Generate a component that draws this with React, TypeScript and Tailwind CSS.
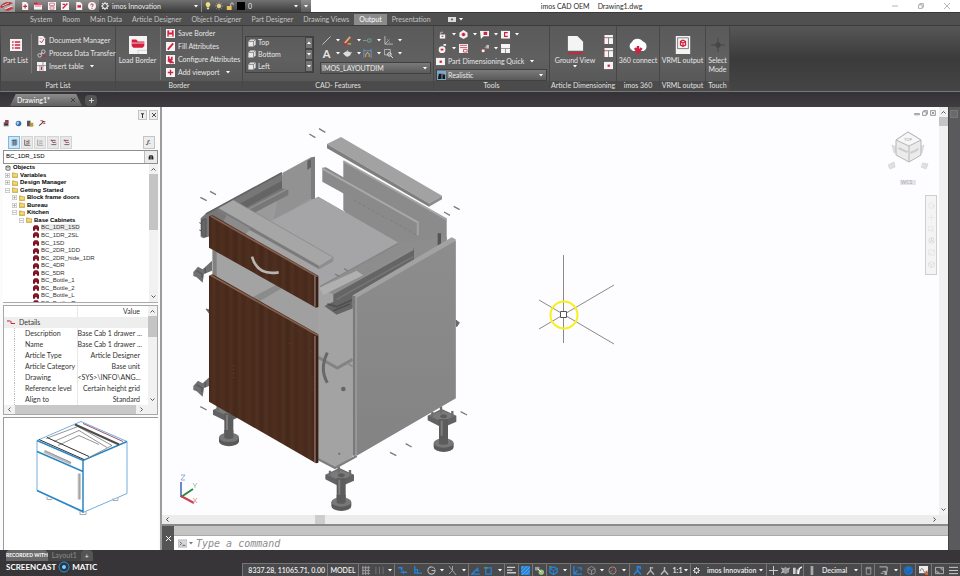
import React from "react";

type P = { d: string; f?: string; s?: string; w?: number };

/* Small pictogram on a 10-unit grid */
function Ico({ p, c = "size-[9px]" }: { p: P[]; c?: string }) {
  return (
    <svg viewBox="0 0 10 10" className={`${c} shrink-0`} aria-hidden="true">
      {p.map((q, i) => (
        <path key={i} d={q.d} fill={q.f ?? "none"} stroke={q.s ?? "none"} strokeWidth={q.w ?? 1} />
      ))}
    </svg>
  );
}

const R = "#d3203f";
const W = "#f4f4f4";
const B = "#2384dd";
const tile: P = { d: "M0 0H10V10H0Z", f: W };
const page: P = { d: "M1.5 0H6.5L9 2.5V10H1.5Z", f: W };

const icons: Record<string, P[]> = {
  newFile: [page, { d: "M5.2 3V8M2.8 5.5H7.6", s: R, w: 1.5 }],
  open: [{ d: "M0 2H10V9.5H0Z", f: W }, { d: "M0 3.5V1H4L5 2H10V3.5Z", f: R }, { d: "M1 5H9", s: R, w: 0.8 }],
  save: [tile, { d: "M2 1.5H8V4.5H2ZM2.5 6H7.5V9H2.5Z", s: "#c76b78", w: 1 }],
  saveAs: [tile, { d: "M2 8L8 2M2 3H5", s: R, w: 1.7 }],
  plot: [page, { d: "M3 4H7.5V7H3Z", f: R }],
  help: [{ d: "M5 0A5 5 0 1 0 5 10A5 5 0 1 0 5 0", f: W }, { d: "M3.5 4Q3.5 2.3 5 2.3T6.5 4Q6.5 5 5 5.5V6.5M5 7.5V8.7", s: R, w: 1.1 }],
  gear: [{ d: "M5 2A3 3 0 1 0 5 8A3 3 0 1 0 5 2M5 0V2M5 8V10M0 5H2M8 5H10M1.5 1.5L2.8 2.8M7.2 7.2L8.5 8.5M8.5 1.5L7.2 2.8M2.8 7.2L1.5 8.5", s: "#eee", w: 1.3 }],
  bulb: [{ d: "M5 0A3 3 0 0 0 3.4 5.5V7H6.6V5.5A3 3 0 0 0 5 0", f: "#f3dd79" }, { d: "M3.6 8.3H6.4", s: "#ddd", w: 1.6 }],
  sun: [{ d: "M5 2.5A2.5 2.5 0 1 0 5 7.5A2.5 2.5 0 1 0 5 2.5", f: "#f5df8c" }, { d: "M5 0V10M0 5H10M1.5 1.5L8.5 8.5M8.5 1.5L1.5 8.5", s: "#dacb95", w: 0.6 }],
  lock: [{ d: "M1 5H7V10H1Z", f: "#e9c456" }, { d: "M6 5V2.5Q6 1 7.5 1T9 2.5V4", s: "#ddd" }],
  list: [tile, { d: "M1.8 2.5H3M1.8 5H3M1.8 7.5H3M4 2.5H8.5M4 5H8.5M4 7.5H8.5", s: R, w: 1.1 }],
  doc: [page, { d: "M3 5.5L5 7.5L8 3", s: R, w: 1 }, { d: "M3 2.5H6", s: "#999", w: 0.8 }],
  link: [{ d: "M3 5A2 2 0 1 0 3 9A2 2 0 1 0 3 5M7 1A2 2 0 1 0 7 5A2 2 0 1 0 7 1M4 6L6 4", s: "#c8c8c8", w: 1.1 }, { d: "M6 8H10", s: R, w: 1.4 }],
  insTable: [tile, { d: "M0 4H10M3.3 4V10M6.6 0V10", s: "#777", w: 0.8 }, { d: "M5 5V9", s: R, w: 1.2 }],
  border: [tile, { d: "M1.5 2H4L5 3H8.5V5.5L7.5 6.5H2.5L1.5 5.5Z", f: R }, { d: "M1.5 3.9H8.5", s: "#fff", w: 0.4 }, { d: "M5 10V8H10", s: "#ccc", w: 0.4 }],
  disk: [tile, { d: "M1.5 1.5H8.5V8.5H1.5Z", f: R }, { d: "M3.5 1.5H6.5V4H3.5ZM3 6H7V8.5H3Z", f: W }],
  pen: [tile, { d: "M2 8.5L8 1.5", s: R, w: 2 }],
  tool: [tile, { d: "M3 1.5V5L8.5 9M3 5H6.5V2M2 6L6 9", s: R, w: 1.8 }],
  plus: [tile, { d: "M5 2V8M2 5H8", s: R, w: 1.5 }],
  cube: [{ d: "M0.5 3L3 0.5H9.5V7L7 9.5H0.5Z", f: "#e8e8e8" }, { d: "M0.5 3H7V9.5M7 3L9.5 0.5", s: "#666", w: 0.9 }],
  line: [{ d: "M0.5 9.5L9.5 0.5", s: "#ccc", w: 1 }],
  pencil: [{ d: "M2 8L8 1", s: "#e4a86a", w: 2 }, { d: "M0 9H5L6.5 6", s: R, w: 1.2 }, { d: "M5 8.8H9", s: "#e6d34c", w: 1.1 }],
  extend: [{ d: "M0 5H4", s: "#999", w: 1 }, { d: "M7 3A2 2 0 1 0 7 7A2 2 0 1 0 7 3", s: "#5fa08e", w: 1.2 }],
  axes: [{ d: "M1 0V9H10M1 9L6 4", s: "#bbb", w: 1 }, { d: "M3 3L6 6V8.5", s: "#7297bf", w: 0.8 }],
  teapot: [{ d: "M1.5 4Q5 1 8 4L10 3L8 7Q5 10 2.5 7.5L0 5ZM4.5 1H5.5V2H4.5Z", f: "#dedede" }],
  dim: [{ d: "M1 0V10M9 0V10M1 2H9", s: "#5d9bd5", w: 1 }, { d: "M3 9V6L5 4L7 6V9", s: "#e39b44", w: 1.2 }],
  zoom: [{ d: "M0.5 0.5H7V6.5H0.5Z", s: "#bbb", w: 1 }, { d: "M6 4A2 2 0 1 0 6 8A2 2 0 1 0 6 4M7.5 7.5L10 10", s: "#ddd", w: 1.1 }],
  smallLock: [{ d: "M2 5H8V9.5H2Z", f: W }, { d: "M3 5V2.5H5.5", s: "#bbb", w: 1 }, { d: "M4 7H6", s: R, w: 1.2 }],
  ring: [{ d: "M5 0L9.5 3V7.5L5 10L0.5 7.5V3Z", f: W }, { d: "M5 3V7M3 5H7", s: R, w: 2 }],
  flag: [{ d: "M0 1H10V7H4L1 10Z", f: W }, { d: "M4 2H8V5.5H4Z", f: R }],
  cTile: [{ d: "M0 1H10V9.5H0Z", f: W }, { d: "M7.5 3H4V7H7.5", s: R, w: 1.3 }],
  bomb: [{ d: "M4.5 2.5A3.7 3.7 0 1 0 4.5 10A3.7 3.7 0 1 0 4.5 2.5M6 0H9V2H6Z", f: W }, { d: "M3 6.2H6", s: R, w: 2 }],
  frame: [tile, { d: "M1 1.5H9M1 4H9M5 6V9H9V6Z", s: "#d1576b", w: 1.1 }],
  key: [{ d: "M2 6H5V9H2Z", f: W }, { d: "M4 6L8 2", s: "#aaa", w: 1.2 }, { d: "M3 5.5L6 4.5", s: R, w: 1.3 }, { d: "M7 1H10V5H7Z", f: "#bbb" }],
  panes: [tile, { d: "M0 5H10M5 5V10", s: "#777", w: 0.8 }],
  dot: [{ d: "M0 1H10V9H0Z", f: W }, { d: "M4 4H6.5V6.5H4Z", f: R }],
  scene: [{ d: "M0 0H10V10H0Z", f: "#73acd0" }, { d: "M1 9L2 3H5V9ZM6 9V4H9V9Z", f: "#161616" }, { d: "M5 3H7V5H5Z", f: R }],
  ground: [{ d: "M1 0H6L9 3V7.7H1Z", f: W }, { d: "M1 9.2H9", s: R, w: 0.9 }],
  tbl: [tile, { d: "M0 3H10M5 3V10", s: "#777", w: 1 }, { d: "M0 0V10", s: R, w: 1 }],
  cloud: [{ d: "M2.5 8A2.5 2.5 0 0 1 2 3.5A3.2 3.2 0 0 1 7.5 3.3A2.5 2.5 0 0 1 7.7 8Z", f: "#fff" }, { d: "M5 5.5V9M3.5 6.5L5 8.8L6.8 6.5", s: R, w: 1.2 }],
  vrml: [{ d: "M1 0H9V10H1Z", f: W }, { d: "M2 1H8V7H2Z", s: "#555", w: 0.4 }, { d: "M3.6 3L5 2.3L6.4 3V5L5 5.7L3.6 5ZM3.6 3L5 4L6.4 3M5 4V5.7", s: R, w: 0.7 }],
  cross: [{ d: "M5 0V10M0 5H10", s: "#393939", w: 0.5 }, { d: "M3.7 3.7H6.3V6.3H3.7Z", s: "#393939", w: 0.5 }],
  house: [{ d: "M0 9.5V3.5L2.5 0.5H7.5L10 3.5V9.5H6.5V7H3.5V9.5Z", f: "#7c1020" }, { d: "M2.5 3.5H7.5", s: "#b74a58", w: 0.7 }],
  folder: [{ d: "M0.5 1.5H4L5 3H9.5V9H0.5Z", f: "#f3ce55", s: "#8b7326", w: 0.8 }, { d: "M2.5 5H9", s: "#fff0af", w: 1 }],
  db: [{ d: "M1.5 2.5Q5 0 8.5 2.5V8Q5 10 1.5 8ZM1.5 2.5Q5 5 8.5 2.5", s: "#333", w: 1, f: "#ddd" }],
  binoc: [{ d: "M1 9V5L3 1.5H4.5V9ZM9 9V5L7 1.5H5.5V9Z", f: "#222" }],
  t1: [{ d: "M1 3H8V9H1Z", f: "#777" }, { d: "M3 0H8V4H3Z", f: "#a33643" }, { d: "M2 6H7", s: "#111", w: 1.5 }],
  t2: [{ d: "M5 1A4 4 0 1 0 5 9A4 4 0 1 0 5 1", f: "#326fae" }, { d: "M2 4Q4 1 6 3L5 6L3 7", f: "#a7d2ec" }],
  t3: [{ d: "M0 1H5V9H0Z", f: "#555" }, { d: "M4 4H9V9.5H4Z", f: "#b9963f" }],
  t4: [{ d: "M0 8L4 5L6 2L9 3", s: "#444", w: 1.5 }, { d: "M2 1H5V4M6 5H9", s: R, w: 1.2 }],
  b1: [{ d: "M1 2L3 0.5H9V8L7 9.5H1Z", f: "#8da4b3" }, { d: "M4 2V9M7 2V9M1 2H7", s: "#34536a", w: 1 }],
  b2: [{ d: "M1 1V9H9M3 4H6M7 1V7M3 7H6", s: "#555", w: 1.2 }, { d: "M4 2L6 5", s: "#a44", w: 1 }],
  b3: [{ d: "M1 1V9H9M3 3H8M3 6H8", s: "#888", w: 1 }],
  b4: [{ d: "M1 2H8M2 8H9M4 5H7", s: "#555", w: 1.2 }, { d: "M2 1L4 5M7 4L9 6", s: R, w: 1 }],
  sGrid: [{ d: "M1 0V10M4 0V10M7 0V10M0 2H9M0 5H9M0 8H9", s: "#999", w: 1.2 }],
  sGrid2: [{ d: "M1 1V9M5 1V9M9 1V9", s: "#777", w: 1 }],
  sSnap: [{ d: "M0 2H4V5M3 7H10", s: B, w: 1.8 }, { d: "M6 5V9", s: B, w: 1 }],
  sOrtho: [{ d: "M2 0V8H10M2 4H5V8", s: B, w: 1.4 }],
  sPolar: [{ d: "M5 1A4 4 0 1 0 9 5H5", s: "#bbb", w: 1.2 }, { d: "M5 1A4 4 0 0 1 9 4", s: "#bbb", w: 1 }],
  sIso: [{ d: "M1 0L9 10M5 0V5L1 9", s: "#aaa", w: 1 }],
  sTrack: [{ d: "M0 9H10M1 9L8 2M6 5H9", s: B, w: 1.5 }],
  sOsnap: [{ d: "M2 2H8V9H2Z", s: B, w: 1.3 }, { d: "M0 2H4", s: "#45a45c", w: 1.6 }],
  sLines: [{ d: "M0 1.5H9M0 4.5H6M0 7.5H10", s: "#ccc", w: 1.5 }],
  sHatch: [{ d: "M0 0H10V10H0Z", f: B }, { d: "M0 3L3 0M0 7L7 0M1 10L10 1M5 10L10 5", s: "#9bc8ef", w: 0.6 }],
  sSel: [{ d: "M0 1H5V5H0Z", f: "#999" }, { d: "M7 4A3 3 0 1 0 7 10A3 3 0 1 0 7 4", f: "#9fc27a" }, { d: "M3 3L7 7", s: "#eee", w: 1 }],
  sGlobe: [{ d: "M5 1L9 3V7L5 9.5L1 7V3Z", s: B, w: 1.4 }, { d: "M1 3L5 5L9 3M5 5V9", s: B, w: 1 }, { d: "M0 1H3", s: "#45a45c", w: 1.5 }],
  sUcs: [{ d: "M1 0V9H10M1 9L5 5M5 2H9V5", s: B, w: 1.5 }],
  sCube: [{ d: "M5 0.5L9 3V7.5L5 9.5L1 7.5V3ZM1 3L5 5L9 3M5 5V9.5", s: "#999", w: 0.9 }],
  sGizmo: [{ d: "M5 1A4 4 0 1 0 5 9A4 4 0 1 0 5 1", s: "#999", w: 1 }, { d: "M5 2V5L8 7", s: R, w: 1 }, { d: "M5 5L2 7", s: "#4a9c57", w: 1 }],
  sMan: [{ d: "M5 1V5L1 9.5M5 5L9 9.5M4 1H8V4", s: B, w: 1.8 }],
  sMan2: [{ d: "M5 1V5L1 9.5M5 5L9 9.5M5 2H8", s: "#bbb", w: 1.4 }],
  sMan3: [{ d: "M5 1V5L1 9.5M5 5L9 9.5", s: "#bbb", w: 1.6 }],
  sPlus: [{ d: "M5 0V10M0 5H10", s: "#ccc", w: 1.1 }],
  sIsolate: [{ d: "M5 1L9 3V7L5 9L1 7V3Z", f: "#999" }, { d: "M0 2L3 4M10 2L7 4M0 8L3 6", s: "#ddd", w: 0.9 }],
  sBars: [{ d: "M0 2H3V9H0ZM4 4H6V9H4Z", f: "#ccc" }, { d: "M6 9L7 3L10 1", s: "#fff", w: 1.6 }],
  sBar: [{ d: "M4 0H7V10H4Z", f: "#aaa" }],
  sProps: [{ d: "M2.5 1.5H7.5V9H2.5ZM2 3H8", s: "#999", w: 1.1 }],
  sMonitor: [{ d: "M0.5 1H9V6H4M2 8H5", s: "#bbb", w: 1.1 }, { d: "M6 6H9V10H6Z", f: "#aaa" }],
  sPerf: [{ d: "M5 0A5 5 0 1 0 5 10A5 5 0 1 0 5 0", f: "#1d71c4" }, { d: "M2 5L5 8L8 4", s: "#124b86", w: 0.8 }],
  sPic: [{ d: "M0 0H10V8H0Z", f: "#eee" }, { d: "M1 6Q3 0 5 5T9 5", s: "#555", w: 0.8 }, { d: "M7 6H10V10H7Z", f: "#e2633a" }],
  sFull: [{ d: "M0.5 1.5H9.5V8.5H0.5ZM2 5V7H5M8 5V3H6", s: "#bbb", w: 1 }],
  sMenu: [{ d: "M0 1.5H10M0 5H10M0 8.5H10", s: "#ccc", w: 1.1 }],
};

const I = ({ n, c }: { n: string; c?: string }) => <Ico p={icons[n]} c={c} />;

function Caret({ c = "text-white" }: { c?: string }) {
  return (
    <svg viewBox="0 0 4 3" className={`h-[3px] w-[4px] shrink-0 ${c}`} aria-hidden="true">
      <path d="M0 0H4L2 2.5Z" fill="currentColor" />
    </svg>
  );
}

/* Drop-down with its arrow drawn over the right edge */
function Combo({ label, options, c, s }: { label: string; options: string[]; c: string; s: string }) {
  return (
    <div className={`relative flex items-center ${c}`}>
      <select aria-label={label} className={`h-[10px] w-full appearance-none bg-transparent leading-[10px] text-[#ececec] outline-none ${s}`}>
        {options.map((o) => (
          <option key={o}>{o}</option>
        ))}
      </select>
      <span className="pointer-events-none absolute right-[3px]">
        <Caret />
      </span>
    </div>
  );
}

function TitleBar() {
  const quick: [string, string][] = [["newFile", "New"], ["open", "Open"], ["save", "Save"], ["saveAs", "Save as"], ["plot", "Plot"], ["help", "Help"]];
  return (
    <header className="flex h-[13px] items-stretch border-b border-[#3a3a3a] bg-white">
      <div className="flex w-[311px] shrink-0 items-stretch bg-linear-to-b from-[#8d8d8d] to-[#5c5c5c]">
        <button aria-label="Application menu" className="w-[15px] bg-linear-to-b from-[#c7c7c7] to-[#929292]">
          <svg viewBox="0 0 15 12" className="h-[12px] w-[15px]" aria-hidden="true">
            <path d="M0 7Q3 2 9 2L13 3L9 5Q5 5 2 8Z" fill="#b52a33" />
            <path d="M4 10L11 7L14 8L8 11Z" fill="#cf343e" />
            <path d="M2 6L9 3M5 9L12 6" stroke="#fff" strokeWidth=".7" />
          </svg>
        </button>
        <div className="flex w-[84px] items-center justify-between pr-[3px] pl-[6px]">
          {quick.map(([n, l]) => (
            <button key={n} aria-label={l} className="flex">
              <I n={n} c="size-[8px]" />
            </button>
          ))}
        </div>
        <div className="flex w-[102px] items-center bg-linear-to-b from-[#717171] to-[#3e3e3e] pl-[2px]">
          <I n="gear" c="size-[8px]" />
          <Combo label="Workspace" options={["imos Innovation"]} c="flex-1" s="pl-[3px]" />
        </div>
        <div className="flex w-[100px] items-center gap-[3px] border-l border-[#8a8a8a] bg-linear-to-b from-[#717171] to-[#3e3e3e] pl-[2px]">
          <I n="bulb" c="size-[8px]" />
          <I n="sun" c="size-[8px]" />
          <I n="lock" c="size-[8px]" />
          <span className="size-[8px] bg-black" />
          <Combo label="Layer" options={["0"]} c="flex-1" s="" />
        </div>
        <button aria-label="More tools" className="flex flex-1 items-center justify-center">
          <Caret />
        </button>
      </div>
      <h1 className="flex flex-1 items-center justify-center gap-[8px] pr-[16px] text-[#2b2b2b]">
        <span>imos CAD OEM</span>
        <span>Drawing1.dwg</span>
      </h1>
      <div className="flex w-[72px] shrink-0 items-center gap-[20px] pl-[4px]">
        <button aria-label="Minimise" className="flex">
          <Ico c="size-[6px]" p={[{ d: "M0 5H10", s: "#aaa", w: 1.5 }]} />
        </button>
        <button aria-label="Restore" className="flex">
          <Ico c="size-[6px]" p={[{ d: "M1 3H7V9H1ZM3 3V1H9V7H7", s: "#999", w: 1.3 }]} />
        </button>
        <button aria-label="Close" className="flex">
          <Ico c="size-[6px]" p={[{ d: "M0 0L10 10M10 0L0 10", s: "#999", w: 1.2 }]} />
        </button>
      </div>
    </header>
  );
}

function Tabs() {
  const tabs = ["System", "Room", "Main Data", "Article Designer", "Object Designer", "Part Designer", "Drawing Views", "Output", "Presentation"];
  return (
    <nav className="flex h-[12px] shrink-0 items-stretch bg-[#505050] pt-px pl-[25px] text-[#c4c4c4]">
      {tabs.map((t) => (
        <button key={t} className={t === "Output" ? "bg-[#8b8b8b] px-[5px] text-white" : "px-[5px]"}>
          {t}
        </button>
      ))}
      <button aria-label="Ribbon display" className="ml-[12px] flex items-center gap-[3px]">
        <Ico c="h-[5px] w-[8px]" p={[{ d: "M-3 0H13V10H-3Z", f: "#ddd" }, { d: "M5 3A2 2 0 1 0 5 7A2 2 0 1 0 5 3", f: "#555" }]} />
        <Caret />
      </button>
    </nav>
  );
}

function Panel({ title, w, children }: { title: string; w: string; children: React.ReactNode }) {
  return (
    <section className={`flex ${w} shrink-0 flex-col border-r border-[#474747] bg-linear-to-b from-[#5a5a5a] via-[#606060] to-[#555555]`}>
      <div className="flex min-h-0 flex-1 justify-between">{children}</div>
      <h2 className="h-[10px] bg-[#4b4b4b] text-center leading-[9px] whitespace-nowrap text-[#e0e0e0]">{title}</h2>
    </section>
  );
}

function Cmd({ n, t, caret }: { n: string; t: string; caret?: boolean }) {
  return (
    <button className="flex h-[13px] items-center gap-[3px] whitespace-nowrap">
      <I n={n} />
      {t}
      {caret && (
        <span className="pl-[3px]">
          <Caret />
        </span>
      )}
    </button>
  );
}

function Big({ n, t, size, w, caret }: { n: string; t: string; size: string; w: string; caret?: boolean }) {
  return (
    <button className={`flex ${w} flex-col items-center pt-[9px]`}>
      <span className="flex h-[20px] items-center justify-center">
        <I n={n} c={size} />
      </span>
      <span className="mt-px block text-center leading-[9px]">{t}</span>
      {caret && <Caret />}
    </button>
  );
}

function ToolRow({ names, c }: { names: string[]; c: string }) {
  return (
    <div className={`grid grid-cols-4 items-center ${c}`}>
      {names.map((n) => (
        <button key={n} aria-label={n} className="flex items-center gap-[5px]">
          {n === "text" ? <span className="w-[9px] text-[11px] leading-[9px] font-bold">A</span> : <I n={n} c="size-[9px]" />}
          {n !== "frame" && n !== "panes" && <Caret />}
        </button>
      ))}
    </div>
  );
}

function Ribbon() {
  return (
    <div className="flex h-[67px] shrink-0 border-t border-b border-t-[#3b3b3b] border-b-[#777777] bg-linear-to-b from-[#575757] via-[#3b3b3b] to-[#454545] pl-px text-[#e6e6e6]">
      <Panel title="Part List" w="w-[115px]">
        <Big n="list" t="Part List" size="size-[12px]" w="w-[29px] whitespace-nowrap" />
        <div className="my-[8px] flex w-[84px] flex-col border-l border-[#777777] pl-[5px]">
          <Cmd n="doc" t="Document Manager" />
          <Cmd n="link" t="Process Data Transfer" />
          <Cmd n="insTable" t="Insert table" caret />
        </div>
      </Panel>
      <Panel title="Border" w="w-[127px]">
        <Big n="border" t="Load Border" size="size-[18px]" w="w-[43px] whitespace-nowrap" />
        <div className="my-px flex w-[82px] flex-col border-l border-[#777777] pl-[5px]">
          <Cmd n="disk" t="Save Border" />
          <Cmd n="pen" t="Fill Attributes" />
          <Cmd n="tool" t="Configure Attributes" />
          <Cmd n="plus" t="Add viewport" caret />
        </div>
      </Panel>
      <Panel title="CAD- Features" w="w-[191px]">
        <div className="mt-[10px] ml-[2px] flex h-[37px] w-[69px] border border-[#3f3f3f]">
          <ul className="flex flex-1 flex-col justify-around pl-[2px]">
            {["Top", "Bottom", "Left"].map((t) => (
              <li key={t}>
                <button className="flex items-center gap-[2px]">
                  <I n="cube" c="size-[8px]" />
                  {t}
                </button>
              </li>
            ))}
          </ul>
          <div className="flex w-[8px] flex-col">
            {["rotate-180", "", ""].map((r, i) => (
              <button key={i} aria-label={["Scroll up", "Scroll down", "Expand"][i]} className="flex flex-1 items-center justify-center border border-[#444444] bg-[#757575]">
                <span className={`flex ${r}`}>
                  <Caret />
                </span>
              </button>
            ))}
          </div>
        </div>
        <div className="mt-[8px] mr-[2px] flex w-[111px] flex-col">
          <ToolRow names={["line", "pencil", "extend", "axes"]} c="ml-[2px] h-[13px] w-[82px]" />
          <ToolRow names={["text", "teapot", "dim", "zoom"]} c="ml-[2px] h-[13px] w-[82px]" />
          <Combo label="Dimension style" options={["IMOS_LAYOUTDIM"]} c="mt-[2px] h-[12px] border border-[#414141] bg-linear-to-b from-[#7a7a7a] to-[#5a5a5a]" s="pl-px" />
        </div>
      </Panel>
      <Panel title="Tools" w="w-[116px]">
        <div className="mx-[2px] mt-[2px] flex flex-1 flex-col">
          <ToolRow names={["smallLock", "ring", "flag", "cTile"]} c="ml-[2px] h-[13px] w-[84px]" />
          <ToolRow names={["bomb", "frame", "key", "panes"]} c="ml-[2px] h-[14px] w-[84px]" />
          <Cmd n="dot" t="Part Dimensioning Quick" caret />
          <div className="mt-px flex h-[12px] items-center border border-[#414141] bg-linear-to-b from-[#7a7a7a] to-[#5a5a5a]">
            <I n="scene" />
            <Combo label="Visual style" options={["Realistic"]} c="flex-1" s="pl-[2px]" />
          </div>
        </div>
      </Panel>
      <Panel title="Article Dimensioning" w="w-[67px]">
        <Big n="ground" t="Ground View" size="size-[19px]" w="ml-[3px] w-[44px] whitespace-nowrap" caret />
        <div className="mt-[9px] mr-[3px] flex flex-col gap-[4px]">
          {["tbl", "tbl", "dot"].map((n, i) => (
            <button key={i} aria-label={`Dimension ${i + 1}`} className="flex">
              <I n={n} />
            </button>
          ))}
        </div>
      </Panel>
      <Panel title="imos 360" w="w-[43px]">
        <Big n="cloud" t="360 connect" size="size-[20px]" w="w-full whitespace-nowrap" />
      </Panel>
      <Panel title="VRML output" w="w-[46px]">
        <Big n="vrml" t="VRML output" size="size-[18px]" w="w-full whitespace-nowrap" />
      </Panel>
      <Panel title="Touch" w="w-[24px]">
        <Big n="cross" t="Select Mode" size="size-[14px]" w="w-full" />
      </Panel>
    </div>
  );
}

type Node = [depth: number, kind: string, label: string];
const tree: Node[] = [
  [0, "db", "Objects"],
  [1, "+", "Variables"],
  [1, "+", "Design Manager"],
  [1, "-", "Getting Started"],
  [2, "+", "Block frame doors"],
  [2, "+", "Bureau"],
  [2, "-", "Kitchen"],
  [3, "-", "Base Cabinets"],
  ...["BC_1DR_1SD", "BC_1DR_2SL", "BC_1SD", "BC_2DR_1DD", "BC_2DR_hide_1DR", "BC_4DR", "BC_5DR", "BC_Bottle_1", "BC_Bottle_2", "BC_Bottle_L", "BC_Bottle_R"].map(
    (l): Node => [4, "house", l],
  ),
];
const indent = ["pl-0", "pl-0", "pl-[7px]", "pl-[14px]", "pl-[28px]"];

function Scroll({ thumb }: { thumb: string }) {
  return (
    <div className="flex w-[9px] shrink-0 flex-col items-center bg-[#f1f1f1] py-[3px]">
      <Ico c="size-[5px]" p={[{ d: "M1 7L5 3L9 7", s: "#333", w: 1.6 }]} />
      <span className={`mt-[2px] w-full bg-[#c4c4c4] ${thumb}`} />
      <span className="flex-1" />
      <Ico c="size-[5px]" p={[{ d: "M1 3L5 7L9 3", s: "#333", w: 1.6 }]} />
    </div>
  );
}

const props = [
  ["Description", "Base Cab 1 drawer ..."],
  ["Name", "Base Cab 1 drawer ..."],
  ["Article Type", "Article Designer"],
  ["Article Category", "Base unit"],
  ["Drawing", "<SYS>\\INFO\\ANG..."],
  ["Reference level", "Certain height grid"],
  ["Align to", "Standard"],
];

function Preview() {
  return (
    <svg viewBox="1 1 154 127" className="h-full w-full" role="img" aria-label="Cabinet preview">
      <g fill="none" strokeWidth="1">
        <path d="M34 21L78 2L124 22V74L80 93L34 71Z" stroke="#74aede" />
        <path d="M34 21L80 41L124 22M80 41V93M34 32L80 52M34 71L80 92" stroke="#2a86c4" strokeWidth="1.500" />
        <path d="M43 19L75 7L109 26L86 38M51 22L76 11L104 28M55 26L76 16L96 25" stroke="#7a7a7a" strokeWidth=".8" />
        <path d="M72 5L116 25" stroke="#4d4d4d" strokeWidth="2" />
        <path d="M80 4L120 22" stroke="#a05560" />
        <path d="M36 20L81 40M44 18L86 37" stroke="#333" />
        <path d="M41 32L68 44M76 54V80" stroke="#bbb" strokeWidth="2.500" />
        <path d="M42 31L68 43M77 54V80" stroke="#777" strokeWidth=".6" />
        <path d="M44 77V80H49V79M110 79V81H115V78M77 92V95H83V92" stroke="#aaa" />
      </g>
    </svg>
  );
}

function Sidebar() {
  return (
    <aside className="flex w-[162px] shrink-0 flex-col border-r-2 border-[#9c9c9c] bg-[#fbfbfb] pt-[3px] pr-[2px] pl-[3px] text-black">
      <div className="flex h-[10px] shrink-0 justify-end gap-[2px]">
        <button aria-label="Pin" className="flex w-[9px] items-center justify-center border border-[#c4c4c4] bg-[#ededed]">
          <Ico c="size-[5px]" p={[{ d: "M2 1.500H8M5 1.500V10", s: "#222", w: 1.8 }]} />
        </button>
        <button aria-label="Close panel" className="flex w-[9px] items-center justify-center border border-[#c4c4c4] bg-[#ededed]">
          <Ico c="size-[4px]" p={[{ d: "M0 0L10 10M10 0L0 10", s: "#222", w: 2 }]} />
        </button>
      </div>
      <div className="flex h-[9px] shrink-0 gap-[5px]">
        {["t1", "t2", "t3", "t4"].map((n, i) => (
          <button key={n} aria-label={["Articles", "Materials", "Parts", "Links"][i]} className="flex">
            <I n={n} c="size-[7px]" />
          </button>
        ))}
      </div>
      <div className="mt-[7px] flex h-[13px] shrink-0 gap-px pl-[5px]">
        {["b1", "b2", "b3", "b4", "b4"].map((n, i) => (
          <button
            key={i}
            aria-label={`View ${i + 1}`}
            className={`flex w-[12px] items-center justify-center border ${i === 0 ? "border-[#7db8e0] bg-[#cfe6f7]" : "border-[#d5d5d5] bg-[#e8e8e8]"}`}
          >
            <I n={n} c="size-[7px]" />
          </button>
        ))}
        <button aria-label="Formula" className="mr-[3px] ml-auto w-[12px] border border-[#c4c4c4] bg-[#ececec] font-serif leading-[9px] italic">
          fₓ
        </button>
      </div>
      <div className="mt-px flex h-[14px] shrink-0 border border-[#8f8f8f] text-[6px] [font-family:'Liberation_Sans',sans-serif]">
        <input aria-label="Find article" defaultValue="BC_1DR_1SD" className="min-w-0 flex-1 bg-white pb-[2px] pl-[2px] outline-none" />
        <button aria-label="Search" className="flex w-[13px] items-center justify-center border-l border-[#bbbbbb] bg-[#ebebeb]">
          <I n="binoc" c="size-[6px]" />
        </button>
      </div>
      <div className="flex h-[139px] shrink-0 overflow-hidden border-b border-[#aaaaaa] bg-white text-[6px] [font-family:'Liberation_Sans',sans-serif]">
        <ul role="tree" aria-label="Articles" className="ml-[2px] grid h-[143px] flex-1 grid-rows-19 leading-[7px]">
          {tree.map(([d, k, l]) => (
            <li key={l} role="treeitem" className={`flex items-center whitespace-nowrap ${indent[d]} ${k === "house" ? "text-[#333333]" : "font-bold"}`}>
              {k === "house" || k === "db" ? (
                <I n={k} c="mr-[2px] size-[6px]" />
              ) : (
                <>
                  <Ico c="mr-[2px] size-[5px]" p={[{ d: `M0.500 0.500H9.500V9.500H0.500ZM2 5H8${k === "+" ? "M5 2V8" : ""}`, s: "#999", w: 1.2 }]} />
                  <I n="folder" c="mr-[2px] size-[6px]" />
                </>
              )}
              <span className={l === "BC_1DR_1SD" ? "bg-[#ececec]" : ""}>{l}</span>
            </li>
          ))}
        </ul>
        <Scroll thumb="h-[56px]" />
      </div>
      <div className="mt-[2px] flex h-[110px] shrink-0 flex-col border border-[#a8a8a8] bg-white">
        <div className="flex min-h-0 flex-1 overflow-hidden">
          <div className="min-w-0 flex-1">
            <table className="w-full table-fixed border-collapse text-[#333333]">
              <thead>
                <tr className="h-[11px]">
                  <th aria-label="Property" className="w-[73px] border-r border-[#e8e8e8] p-0" />
                  <th className="p-0 pr-[8px] text-right font-normal">Value</th>
                </tr>
              </thead>
              <tbody>
                <tr className="h-[11px] bg-[#eeeeee]">
                  <th colSpan={2} className="p-0 text-left font-normal">
                    <span className="flex items-center gap-[3px] pl-[3px]">
                      <Ico c="h-[5px] w-[9px]" p={[{ d: "M-4 2H3M4 2V7H12", s: R, w: 2 }, { d: "M-4 2H0", s: "#999", w: 2 }]} />
                      Details
                    </span>
                  </th>
                </tr>
                {props.map(([a, b]) => (
                  <tr key={a} className="h-[11px] whitespace-nowrap">
                    <th className="border-r border-[#e8e8e8] p-0 text-left font-normal">
                      <span className="ml-[10px] block border-l border-dotted border-[#b9b9b9] pl-[10px] leading-[11px]">{a}</span>
                    </th>
                    <td className="p-0 pr-[8px] text-right">{b}</td>
                  </tr>
                ))}
              </tbody>
            </table>
          </div>
          <Scroll thumb="h-[21px]" />
        </div>
        <div className="flex h-[9px] shrink-0 items-center gap-[3px] bg-[#f1f1f1] px-[3px]">
          <Ico c="size-[5px]" p={[{ d: "M7 1L3 5L7 9", s: "#333", w: 1.6 }]} />
          <span className="h-full w-[121px] bg-[#c8c8c8]" />
          <Ico c="size-[5px]" p={[{ d: "M3 1L7 5L3 9", s: "#333", w: 1.6 }]} />
        </div>
      </div>
      <div className="mt-[2px] min-h-0 flex-1 border-t border-l border-[#9a9a9a] bg-white">
        <Preview />
      </div>
    </aside>
  );
}

/* Adjustable leg: mounting plate, stem and round base */
function Leg({ x, y }: { x: number; y: number }) {
  return (
    <g transform={`translate(${x} ${y})`}>
      <path d="M-48 0L-6 -20L38 0V18L-4 36L-48 14Z" fill="#626262" />
      <path d="M-44 0L-6 -16L34 0L-4 18Z" fill="#7a7a7a" />
      <path d="M-14 10H13V85H-14Z" fill="#5c5c5c" />
      <path d="M-9 15H-3V85H-9Z" fill="#7d7d7d" />
      <path d="M-30 82V94A30 15 0 0 0 30 94V82Z" fill="#5a5a5a" />
      <ellipse cx="0" cy="82" rx="30" ry="14" fill="#777" />
      <path d="M-14 60H13V84Q0 91 -14 84Z" fill="#5c5c5c" />
      <ellipse cx="0" cy="2" rx="12" ry="8" fill="#5c5c5c" stroke="#8a8a8a" strokeWidth="2" />
      <path d="M-34 -12V4M26 -14V4M-8 -28V-6" stroke="#6e6e6e" strokeWidth="7" />
    </g>
  );
}

function Hinge({ x, y }: { x: number; y: number }) {
  return (
    <g transform={`translate(${x} ${y})`} fill="#707070">
      <path d="M0 8L14 -8L28 0L56 -26V4L32 14L28 40L10 24L0 20Z" />
      <path d="M10 4L26 14V26M36 -4V12" stroke="#585858" strokeWidth="4" fill="none" />
    </g>
  );
}

function Scene() {
  return (
    <svg viewBox="162 107 777 408" preserveAspectRatio="xMinYMin meet" className="absolute inset-0 h-full w-full" role="img" aria-label="Exploded base cabinet">
      <defs>
        <linearGradient id="wood" x1="0" x2="0.120" y1="0" y2="0" spreadMethod="reflect">
          <stop offset="0" stopColor="#43281b" />
          <stop offset=".35" stopColor="#513020" />
          <stop offset=".6" stopColor="#472a1c" />
          <stop offset="1" stopColor="#4e2e1f" />
        </linearGradient>
        <linearGradient id="side" x1="0" x2="0" y1="0" y2="1">
          <stop offset="0" stopColor="#8d8d8e" />
          <stop offset="1" stopColor="#838384" />
        </linearGradient>
      </defs>
      <g transform="translate(190 120) scale(.33333)">
        <Leg x={117} y={870} />
        <Leg x={761} y={887} />
        <Leg x={454} y={1064} />
        <Hinge x={10} y={448} />
        <Hinge x={10} y={790} />
        <path d="M48 567L58 570V580ZM797 600L808 608L800 620Z" fill="#666" stroke="#666" strokeWidth="3" />
        {/* back panel */}
        <path d="M460 123L770 298V420L600 440L460 270Z" fill="#8b8b8c" />
        <path d="M460 123L770 298" stroke="#a6a6a6" strokeWidth="6" />
        {/* left side */}
        <path d="M68 385L250 182L370 112V240L260 300L250 620L68 500Z" fill="#9a9a9b" />
        <path d="M278 158L363 112V235L250 303Z" fill="#929293" />
        <path d="M363 112L375 110V237H363Z" fill="#7c7c7c" />
        <path d="M352 122L363 116V142L352 150Z" fill="#606060" />
        {/* interior */}
        <path d="M68 390L385 230L625 368L488 520V1010L435 1043L375 1015V660L68 480Z" fill="#a3a3a4" />
        <path d="M250 302L385 230L625 368L390 500Z" fill="#a5a4a6" />
        <path d="M625 368L770 350V380L480 545L390 505Z" fill="#8d8d8e" />
        <path d="M388 503L500 452L520 466L400 525Z" fill="#b0b0b0" />
        <path d="M390 500L625 370" stroke="#858585" strokeWidth="4" />
        <path d="M190 535L258 497L300 520L383 565V640Z" fill="#a0a0a0" />
        <path d="M185 533L258 495L275 505L205 546Z" fill="#8b8b8b" />
        <path d="M68 390L80 396V470L68 466Z" fill="#818181" />
        {/* left drawer slide */}
        <path d="M48 280L276 158V205L295 210V225L190 280L160 300L120 330L40 355L32 350V295Z" fill="#777" />
        <path d="M48 282L276 158" stroke="#636363" strokeWidth="5" />
        <path d="M130 262L276 182V205L150 272Z" fill="#656566" />
        <path d="M160 275L290 208" stroke="#8f8f8f" strokeWidth="5" />
        <path d="M35 300L48 296V350L35 345ZM28 308L36 312M28 330L36 334" fill="#666" stroke="#555" strokeWidth="3" />
        {/* rear rails */}
        <path d="M397 143L408 142L687 302V346L397 185Z" fill="#8a8a8b" />
        <path d="M397 146L685 308" stroke="#a8a8a8" strokeWidth="6" />
        <path d="M680 308L687 304V346H680Z" fill="#a0a0a0" />
        <path d="M411 72L453 51L756 227L717 250Z" fill="#a2a2a3" />
        <path d="M411 72L717 250V260L411 85Z" fill="#7f7f80" />
        <path d="M717 250L756 227V238L717 260Z" fill="#8c8c8c" />
        <path d="M490 240L590 296M600 300L680 345" stroke="#777" strokeWidth="2" strokeDasharray="10 6" />
        {/* right drawer slide */}
        <path d="M430 518L672 384V425L500 524V560L440 584L403 558L430 545Z" fill="#656566" />
        <path d="M430 520L670 387" stroke="#909090" strokeWidth="6" />
        <path d="M440 538L670 410" stroke="#777" strokeWidth="4" />
        <path d="M412 552L440 560L486 540M430 572L480 552" stroke="#4f4f4f" strokeWidth="5" fill="none" />
        <path d="M743 340H753V372L743 378Z" fill="#555" />
        {/* front rail */}
        <path d="M85 265L130 240L430 412L388 438Z" fill="#a6a6a7" />
        <path d="M85 265L388 438V448L85 276Z" fill="#7b7b7c" />
        <path d="M388 438L430 412V424L388 448Z" fill="#8e8e8e" />
        <path d="M130 240L430 412" stroke="#838383" strokeWidth="2" />
        <path d="M110 285L180 325L165 345L100 305Z" fill="#8b8b8b" />
        {/* shelf and base */}
        <path d="M385 712L442 744L488 718" stroke="#838383" strokeWidth="9" fill="none" />
        <path d="M470 728L488 740" stroke="#888" strokeWidth="4" />
        <path d="M385 1018L435 1044L500 1008" stroke="#7e7e7e" strokeWidth="7" fill="none" />
        <path d="M412 698Q388 748 412 788" stroke="#686868" strokeWidth="9" fill="none" />
        <circle cx="460" cy="807" r="7" fill="#666" />
        <circle cx="448" cy="1001" r="3" fill="#666" />
        {/* right side */}
        <path d="M488 526L785 352L797 358V835L497 1008L488 1005Z" fill="#a2a2a2" />
        <path d="M500 533L797 362V835L500 1007Z" fill="url(#side)" />
        <path d="M488 528H496V1007H488Z" fill="#7a7a7a" />
        {/* door and drawer front */}
        <path d="M57 467L68 463L385 643V1028L378 1030L57 845Z" fill="url(#wood)" />
        <path d="M57 288L68 286L385 467V560L378 563L57 383Z" fill="url(#wood)" />
        <path d="M62 288L383 470M62 466L383 646" stroke="#83604f" strokeWidth="5" />
        <path d="M375 468V560M375 648V1028" stroke="#b3958a" strokeWidth="3" />
        <path d="M381 470V562M381 648V1028" stroke="#372018" strokeWidth="7" />
        <path d="M186 410Q202 468 266 457" stroke="#b9b5b2" strokeWidth="8" fill="none" />
        <path d="M130 735V775M300 670V678M363 692V700M366 770V815" stroke="#8b4b36" strokeWidth="2" strokeDasharray="3 9" />
        {/* dowels */}
        <path
          d="M358 42L376 53M387 26L406 37M31 232L50 242M60 214L78 224M762 276L780 286M791 259L809 269M31 860L50 870M600 997L619 1007M647 971L665 981M812 875L831 885M435 462L447 469M462 446L474 453"
          stroke="#7c7c7c"
          strokeWidth="4"
        />
      </g>
      {/* crosshair cursor */}
      <g fill="none" stroke="#8a8a8a">
        <path d="M563.500 255V343M614 285L539 329M539 300L614 344" />
        <circle cx="564" cy="315" r="13.500" stroke="#f6f01c" strokeWidth="2" />
        <path d="M560.500 311.500H566.500V317.500H560.500Z" fill="#fff" stroke="#555" />
      </g>
      {/* coordinate axes */}
      <g fill="none" strokeWidth="1.500">
        <path d="M181 497V482" stroke="#3c62b5" />
        <path d="M181 497L193 489" stroke="#2b8a3a" strokeWidth="2" />
        <path d="M181 496L194 503" stroke="#c9414a" strokeWidth="2" />
        <path d="M181 475H185L181 480H185" stroke="#7d97d2" strokeWidth=".8" />
        <path d="M193 483L195 486L197 483M195 486V488" stroke="#8abf8f" strokeWidth=".8" />
        <path d="M193 498L197 503M197 498L193 503" stroke="#dc8a90" strokeWidth=".8" />
      </g>
    </svg>
  );
}

function Viewport() {
  return (
    <div className="relative min-h-0 flex-1 overflow-hidden bg-[#fdfcfe]">
      <Scene />
      <div className="absolute top-[3px] right-[3px] flex gap-[2px]">
        {["M1 6H9V8H1Z", "M1 3H7V9H1ZM3 3V1H9V7H7", "M1 1H9V9H1ZM3 3L7 7M7 3L3 7"].map((d, i) => (
          <button key={d} aria-label={["Minimise view", "Restore view", "Close view"][i]} className="flex">
            <Ico c="size-[6px]" p={[{ d, s: "#888", w: 1.4 }]} />
          </button>
        ))}
      </div>
      <button aria-label="View cube" className="absolute top-[20px] right-[7px] flex opacity-70">
        <svg viewBox="0 0 48 64" className="h-[64px] w-[48px]" aria-hidden="true">
          <path d="M8 18L16 22L10 26ZM40 18L32 22L38 26ZM4 38L10 35L11 40L6 42ZM38 36L44 37L42 42L37 40" fill="#d5d5d5" stroke="#bbb" strokeWidth=".6" />
          <path d="M24 5L37 13V28L25 35L12 28V13Z" fill="#e4e4e4" stroke="#999" />
          <path d="M24 5L37 13L25 19L12 13Z" fill="#f4f4f4" stroke="#999" />
          <path d="M25 19V35" stroke="#999" />
          <text x="20" y="14" fontSize="4" fill="#777">TOP</text>
          <text x="14" y="22" fontSize="3" fill="#666" transform="rotate(26 14 22)">FRONT</text>
          <text x="27" y="27" fontSize="3" fill="#666" transform="rotate(-26 27 27)">RIGHT</text>
          <rect x="16" y="53" width="16" height="5" fill="#d9dce2" />
          <text x="17" y="57" fontSize="5" fill="#80848a">WCS</text>
        </svg>
      </button>
      <div className="absolute top-[88px] right-[2px] flex h-[80px] w-[12px] flex-col items-center justify-around border border-[#cfcfcf] bg-[#f4f4f4] py-[4px]">
        {["sPolar", "sPlus", "zoom", "sGizmo", "sFull", "sCube"].map((n) => (
          <button key={n} aria-label={n} className="flex opacity-30">
            <I n={n} c="size-[7px]" />
          </button>
        ))}
      </div>
    </div>
  );
}

const cells: [name: string, w: string, sep?: boolean][] = [
  ["sGrid", "w-[15px]", true], ["sGrid2", "w-[12px]"], ["v", "w-[9px]"],
  ["sSnap", "w-[16px]", true], ["sOrtho", "w-[14px]"], ["sPolar", "w-[14px]"], ["v", "w-[8px]"], ["sIso", "w-[13px]"], ["v", "w-[9px]"],
  ["sTrack", "w-[14px]", true], ["sOsnap", "w-[13px]"], ["v", "w-[9px]"],
  ["sLines", "w-[14px]", true], ["sHatch", "w-[14px]", true], ["sSel", "w-[14px]", true], ["sGlobe", "w-[14px]", true], ["v", "w-[10px]"],
  ["sUcs", "w-[14px]", true], ["sCube", "w-[14px]"], ["v", "w-[8px]"], ["sGizmo", "w-[13px]"], ["v", "w-[10px]"],
  ["sMan", "w-[15px]", true], ["sMan2", "w-[13px]"], ["sMan3", "w-[14px]"],
];
const cells2: typeof cells = [["sPlus", "w-[13px]", true], ["sIsolate", "w-[12px]"], ["sBars", "w-[12px]"]];
const cells3: typeof cells = [
  ["sProps", "w-[13px]", true], ["sMonitor", "w-[17px]", true], ["v", "w-[9px]"], ["sPerf", "w-[15px]", true], ["sPic", "w-[16px]", true], ["sFull", "w-[16px]", true], ["sMenu", "w-[13px]"],
];

function Cells({ list }: { list: typeof cells }) {
  return (
    <>
      {list.map(([n, w, sep], i) => (
        <button key={i} aria-label={n === "v" ? "Options" : n.slice(1)} className={`flex shrink-0 items-center justify-center ${w} ${sep ? "border-l border-[#777777]" : ""}`}>
          {n === "v" ? <Caret /> : <I n={n} />}
        </button>
      ))}
    </>
  );
}

function Footer() {
  return (
    <footer className="flex h-[26px] shrink-0 items-end justify-between bg-[#373538] text-[#f0f0f0]">
      <div className="flex h-full flex-col pl-[6px]">
        <div className="flex h-[11px] items-center">
          <button className="h-full rounded-t-sm bg-[#6a6a6a] text-[5px] font-bold text-white">RECORDED WITH</button>
          <button className="h-full bg-[#444444] px-[4px] text-[#8c8c8c]">Layout1</button>
          <button aria-label="New layout" className="h-full rounded-t-sm bg-[#555555] px-[4px] leading-[10px]">
            +
          </button>
        </div>
        <div className="flex items-center gap-[2px] text-[8px] leading-[10px] font-bold text-white">
          SCREENCAST
          <svg viewBox="0 0 12 12" className="size-[12px]" aria-hidden="true">
            <circle cx="6" cy="6" r="5" fill="#203a4e" stroke="#3c8fd0" />
            <circle cx="6" cy="6" r="2" fill="#8cc8f3" />
          </svg>
          MATIC
        </div>
      </div>
      <div className="flex h-[13px] items-stretch border-t border-[#757575] bg-[#4a494b] font-semibold whitespace-nowrap">
        <button className="w-[85px] border-l border-[#777777] pr-[2px] text-right">8337.28, 11065.71, 0.00</button>
        <button className="w-[31px] border-l border-[#777777]">MODEL</button>
        <Cells list={cells} />
        <button className="flex w-[19px] items-center justify-center gap-[2px]">
          1:1
          <Caret />
        </button>
        <div className="flex w-[76px] items-center border-l border-[#777777] pl-[2px]">
          <I n="gear" c="size-[7px]" />
          <Combo label="Workspace switch" options={["imos Innovation"]} c="flex-1" s="pl-[7px]" />
        </div>
        <Cells list={cells2} />
        <div className="flex w-[58px] items-center border-l border-[#777777] pl-[3px]">
          <I n="sBar" />
          <Combo label="Units" options={["Decimal"]} c="flex-1" s="pl-[6px]" />
        </div>
        <Cells list={cells3} />
      </div>
    </footer>
  );
}

export default function App() {
  return (
    <div className="flex h-screen flex-col overflow-hidden bg-[#373538] text-[7px] leading-[9px] [font-family:Lato,'Open_Sans',sans-serif]">
      <TitleBar />
      <Tabs />
      <Ribbon />
      <div className="flex h-[15px] shrink-0 items-end gap-[3px] bg-linear-to-b from-[#343236] to-[#3f3d40] pb-px pl-[10px]">
        <button className="flex h-[12px] w-[72px] items-center justify-between bg-linear-to-b from-[#8c8c8c] to-[#606060] pr-[7px] pl-[7px] text-white [clip-path:polygon(8%_0,92%_0,100%_100%,0_100%)]">
          Drawing1*
          <Ico c="size-[4px]" p={[{ d: "M0 0L10 10M10 0L0 10", s: "#333", w: 2 }]} />
        </button>
        <button aria-label="New drawing" className="flex h-[11px] w-[12px] items-center justify-center rounded-sm bg-[#555555]">
          <Ico c="size-[5px]" p={[{ d: "M5 0V10M0 5H10", s: "#ddd", w: 1.8 }]} />
        </button>
      </div>
      <div className="flex min-h-0 flex-1">
        <Sidebar />
        <main className="flex min-w-0 flex-1 flex-col">
          <div className="flex min-h-0 flex-1">
            <Viewport />
            <Scroll thumb="h-[9px]" />
          </div>
          <div className="flex h-[9px] shrink-0 items-center bg-[#ececec] px-[3px]">
            <Ico c="size-[5px]" p={[{ d: "M7 1L3 5L7 9", s: "#333", w: 1.8 }]} />
            <span className="ml-[145px] h-full w-[10px] bg-[#cdcdcd]" />
            <span className="flex-1" />
            <Ico c="mr-[8px] size-[5px]" p={[{ d: "M3 1L7 5L3 9", s: "#333", w: 1.8 }]} />
          </div>
          <div className="flex h-[26px] shrink-0 border-t-2 border-[#8a8a8a]">
            <div className="flex w-[12px] flex-col items-center justify-center bg-[#555555]">
              <button aria-label="Close command line" className="flex">
                <Ico c="size-[5px]" p={[{ d: "M0 0L10 10M10 0L0 10", s: "#fff", w: 2 }]} />
              </button>
            </div>
            <div className="flex flex-1 flex-col">
              <div className="h-[10px] border-b border-[#aaaaaa] bg-[#c4c4c4]" />
              <div className="flex flex-1 items-center bg-white pt-px pl-[4px]">
                <button aria-label="Recent commands" className="flex items-center gap-[2px]">
                  <Ico p={[{ d: "M0 1H10V9H0Z", f: "#d5d8dd", s: "#aaa", w: 0.8 }, { d: "M2 3L4 5L2 7M5 7H8", s: "#555", w: 1 }]} />
                  <Caret c="text-[#777777]" />
                </button>
                <input
                  aria-label="Command line"
                  placeholder="Type a command"
                  className="ml-[3px] min-w-0 flex-1 text-[10px] leading-[12px] italic outline-none [font-family:'DejaVu_Sans_Mono',monospace] placeholder:text-[#8d8d8d]"
                />
              </div>
            </div>
          </div>
        </main>
        <div className="w-[12px] shrink-0 border-l border-[#444444] bg-[#5a595b] pt-[3px] pl-px">
          <div className="size-[8px] border border-[#777777] bg-[#6a6a6a]" />
        </div>
      </div>
      <Footer />
    </div>
  );
}
